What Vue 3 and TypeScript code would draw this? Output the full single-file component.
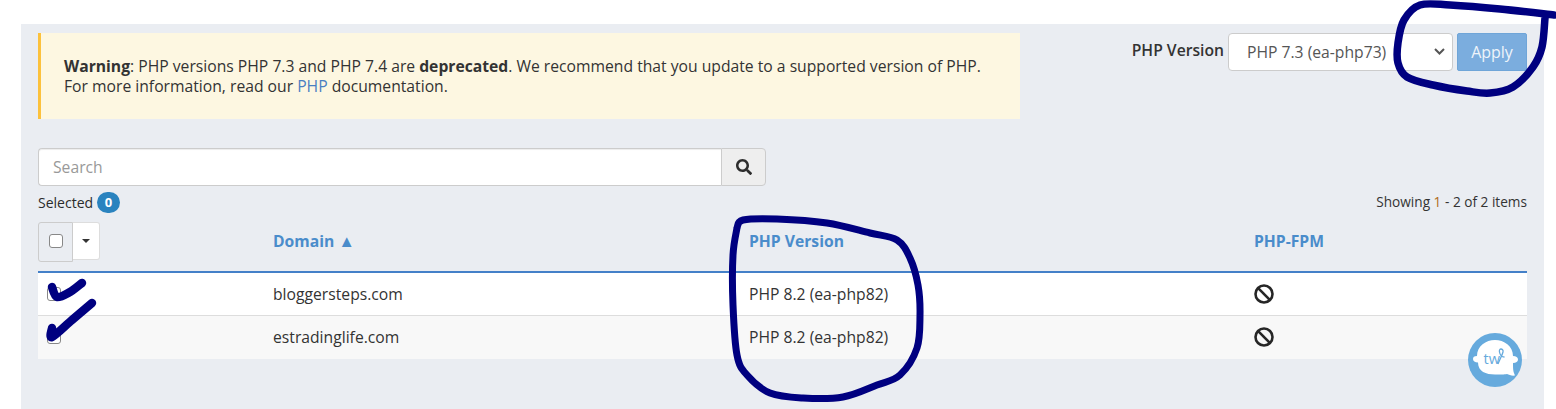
<script setup lang="ts">
type Pt = [number, number];
type Row = { domain: string; version: string };
type Ink = { d: string; width: number };

const rows: Row[] = [
  { domain: "bloggersteps.com", version: "PHP 8.2 (ea-php82)" },
  { domain: "estradinglife.com", version: "PHP 8.2 (ea-php82)" },
];

function smooth(p: Pt[]): string {
  let d = `M${p[0][0]} ${p[0][1]}`;
  for (let i = 0; i < p.length - 1; i++) {
    const a = p[Math.max(0, i - 1)];
    const b = p[i];
    const c = p[i + 1];
    const e = p[Math.min(p.length - 1, i + 2)];
    const c1x = b[0] + (c[0] - a[0]) / 6;
    const c1y = b[1] + (c[1] - a[1]) / 6;
    const c2x = c[0] - (e[0] - b[0]) / 6;
    const c2y = c[1] - (e[1] - b[1]) / 6;
    d += ` C${c1x.toFixed(1)} ${c1y.toFixed(1)} ${c2x.toFixed(1)} ${c2y.toFixed(1)} ${c[0]} ${c[1]}`;
  }
  return d;
}

const strokes: Ink[] = [
  { width: 7.5, d: smooth([[1554,15],[1500,9],[1450,5],[1420,5],[1404,20],[1398,43],[1398,63],[1407,77],[1433,85],[1467,91],[1490,93],[1513,87],[1533,67],[1542,47],[1545,18]]) },
  { width: 7, d: smooth([[737,228],[743,220],[777,219],[827,223],[870,233],[897,240],[910,258],[918,285],[920,315],[917,348],[900,375],[877,385],[843,397],[803,398],[770,393],[747,375],[737,355],[733,305],[733,255],[737,228]]) },
  { width: 8.5, d: smooth([[52,287],[57,297],[70,292],[82,283]]) },
  { width: 8.5, d: smooth([[52,328],[52,337],[72,320],[92,303]]) },
];
</script>

<template>
  <div class="page">
    <main class="panel">
      <div class="top">
        <div class="warning">
          <strong>Warning</strong>: PHP versions PHP 7.3 and PHP 7.4 are <strong>deprecated</strong>. We recommend that you update to a supported version of PHP.<br />
          For more information, read our <a class="link">PHP</a> documentation.
        </div>
        <form class="version-form" @submit.prevent>
          <label class="version-label" for="ver">PHP Version</label>
          <div class="select-wrap">
            <select id="ver" class="version-select">
              <option>PHP 7.3 (ea-php73)</option>
            </select>
            <svg class="chevron" width="11" height="7" viewBox="0 0 11 7"><path d="M1 1 5.500 5.500 10 1" fill="none" stroke="#555" stroke-width="2"/></svg>
          </div>
          <button class="apply" type="button">Apply</button>
        </form>
      </div>

      <div class="search">
        <input class="search-input" placeholder="Search" />
        <button class="search-btn" type="button" aria-label="Search">
          <svg width="16" height="16" viewBox="0 0 512 512"><path fill="#2d2d2d" d="M505 442.7 405.3 343c-4.5-4.5-10.6-7-17-7H372c27.6-35.3 44-79.700 44-128C416 93.100 322.900 0 208 0S0 93.100 0 208s93.100 208 208 208c48.300 0 92.700-16.400 128-44v16.300c0 6.400 2.500 12.500 7 17l99.700 99.700c9.400 9.400 24.600 9.400 33.900 0l28.300-28.300c9.400-9.400 9.400-24.600.1-34zM208 336c-70.700 0-128-57.200-128-128 0-70.700 57.200-128 128-128 70.700 0 128 57.200 128 128 0 70.700-57.200 128-128 128z"/></svg>
        </button>
      </div>

      <div class="meta">
        <div class="selected">Selected <span class="badge">0</span></div>
        <div class="showing">Showing <span class="num">1</span> - 2 of 2 items</div>
      </div>

      <div class="table">
        <div class="row head">
          <div class="cell">
            <div class="check-group">
              <span class="check-box"><span class="box"></span></span>
              <span class="caret-box"><span class="caret"></span></span>
            </div>
          </div>
          <div class="cell th">Domain <span class="sort">▲</span></div>
          <div class="cell th">PHP Version</div>
          <div class="cell th">PHP-FPM</div>
        </div>
        <div v-for="(r, i) in rows" :key="r.domain" class="row body" :class="{ odd: i === 1 }">
          <div class="cell"><span class="box row-box"></span></div>
          <div class="cell">{{ r.domain }}</div>
          <div class="cell">{{ r.version }}</div>
          <div class="cell">
            <svg class="ban" width="20" height="20" viewBox="0 0 20 20"><circle cx="10" cy="10" r="8.500" fill="none" stroke="#262626" stroke-width="2.600"/><path d="M4.200 4.200 15.800 15.800" stroke="#262626" stroke-width="2.600"/></svg>
          </div>
        </div>
      </div>
    </main>

    <div class="chat" aria-label="Chat widget">
      <svg width="54" height="54" viewBox="0 0 54 54">
        <circle cx="27" cy="27" r="27" fill="#66aadd"/>
        <path fill="#fff" d="M9 23C9 13 18 7 27 7s18 6 18 16c3 0 5 1.500 5 3.500S48 30 45 30c0 3 0 6 .5 8.500 .3 1.500 1 2.500 1.500 4-3 .5-6-.5-8-1.500-3 .5-6 .5-12 .5-9 0-17-3-17-12-3 0-5-1.500-5-3.500S6 23 9 23z"/>
        <text x="15.500" y="31" class="tw">tw</text>
        <path fill="none" stroke="#66aadd" stroke-width="1.300" d="M30 31c1-3 4-8 5-12 .5-2-1-3-2-3s-2 1-1.500 3c.5 3 2 5 5 5"/>
      </svg>
    </div>

    <svg class="ink" width="1556" height="409" viewBox="0 0 1556 409" aria-hidden="true">
      <path v-for="(s, i) in strokes" :key="i" :d="s.d" fill="none" stroke="#000080" :stroke-width="s.width" stroke-linecap="round" stroke-linejoin="round"/>
    </svg>
  </div>
</template>

<style>
html, body { margin: 0; background: #fff; }
</style>

<style scoped>
.page {
  position: relative;
  width: 1556px;
  height: 409px;
  overflow: hidden;
  padding: 24px 12px 0 21px;
  box-sizing: border-box;
  font-family: "Open Sans", sans-serif;
  font-size: 15.700px;
  color: #333;
}
.panel {
  height: 385px;
  box-sizing: border-box;
  background: #eaedf2;
  padding: 9px 17px 0;
}
.top {
  display: flex;
  justify-content: space-between;
  align-items: flex-start;
}
.warning {
  width: 982px;
  height: 86px;
  box-sizing: border-box;
  background: #fdf7e1;
  border-left: 3px solid #fcc13c;
  padding: 23px 23px 0;
  line-height: 20px;
}
.link { color: #4a7fc1; }
.version-form {
  display: flex;
  align-items: flex-start;
}
.version-label {
  font-weight: 600;
  line-height: 34px;
  margin-right: 4px;
}
.select-wrap {
  position: relative;
  width: 225px;
  height: 38px;
  margin-right: 4px;
}
.version-select {
  display: block;
  width: 100%;
  height: 100%;
  box-sizing: border-box;
  appearance: none;
  border: 1px solid #ccc;
  border-radius: 4px;
  background: #fff;
  color: #555;
  font-family: inherit;
  font-size: 15.700px;
  padding: 0 18px;
}
.chevron {
  position: absolute;
  right: 8px;
  top: 15px;
}
.apply {
  width: 70px;
  height: 38px;
  border: 1px solid #6fa5d8;
  border-radius: 2px;
  background: #7badde;
  color: #eef4fa;
  font-family: inherit;
  font-size: 16px;
  padding: 0;
}
.search {
  display: flex;
  width: 728px;
  height: 38px;
  margin-top: 29px;
}
.search-input {
  flex: 1;
  min-width: 0;
  box-sizing: border-box;
  border: 1px solid #ccc;
  border-right: 0;
  border-radius: 4px 0 0 4px;
  padding: 0 14px;
  font: inherit;
  color: #555;
  background: #fff;
  box-shadow: inset 0 1px 1px rgba(0, 0, 0, 0.075);
  outline: none;
}
.search-input::placeholder { color: #999; opacity: 1; }
.search-btn {
  width: 45px;
  box-sizing: border-box;
  border: 1px solid #ccc;
  border-radius: 0 4px 4px 0;
  background: #eee;
  display: flex;
  align-items: center;
  justify-content: center;
  padding: 0;
}
.meta {
  display: flex;
  justify-content: space-between;
  align-items: center;
  height: 21px;
  margin-top: 6px;
  font-size: 14px;
  line-height: 21px;
}
.selected {
  display: flex;
  gap: 4px;
  color: #2b2b2b;
}
.showing {
  font-size: 13.650px;
  margin-top: -2px;
}
.badge {
  display: block;
  width: 23px;
  height: 21px;
  line-height: 21px;
  border-radius: 11px;
  background: #2a83bf;
  color: #fff;
  font-weight: 700;
  font-size: 13px;
  text-align: center;
}
.num { color: #b06a20; }
.table { margin-top: 9px; }
.row {
  display: grid;
  grid-template-columns: 235px 476px 505px 273px;
  align-items: center;
}
.head {
  height: 49px;
  align-items: start;
  border-bottom: 2px solid #4480c8;
}
.th {
  color: #4a8ccb;
  font-weight: 700;
  line-height: 38px;
}
.sort { font-size: 16.500px; }
.body {
  height: 42px;
  background: #fff;
}
.body.odd {
  height: 44px;
  box-sizing: border-box;
  padding-bottom: 1px;
  background: #f8f8f8;
  border-top: 1px solid #ddd;
}
.check-group {
  display: flex;
  align-items: flex-start;
}
.check-box {
  width: 35px;
  height: 40px;
  box-sizing: border-box;
  padding-bottom: 2px;
  border: 1px solid #ccc;
  border-radius: 3px 0 0 3px;
  display: flex;
  align-items: center;
  justify-content: center;
  background: #eaedf2;
}
.caret-box {
  width: 27px;
  height: 38px;
  box-sizing: border-box;
  border: 1px solid #ddd;
  border-left: 0;
  border-radius: 0 3px 3px 0;
  background: #fff;
  display: flex;
  align-items: center;
  justify-content: center;
}
.caret {
  width: 0;
  height: 0;
  border-left: 4px solid transparent;
  border-right: 4px solid transparent;
  border-top: 4px solid #333;
}
.box {
  display: block;
  width: 14px;
  height: 14px;
  box-sizing: border-box;
  border: 1.500px solid #888;
  border-radius: 3px;
  background: #fff;
}
.row-box { margin-left: 9px; }
.ban { display: block; }
.chat {
  position: absolute;
  left: 1468px;
  top: 333px;
  width: 54px;
  height: 54px;
}
.chat svg { display: block; }
.tw {
  font-family: "Open Sans", sans-serif;
  font-size: 14.500px;
  fill: #66aadd;
}
.ink {
  position: absolute;
  left: 0;
  top: 0;
  pointer-events: none;
}
</style>
